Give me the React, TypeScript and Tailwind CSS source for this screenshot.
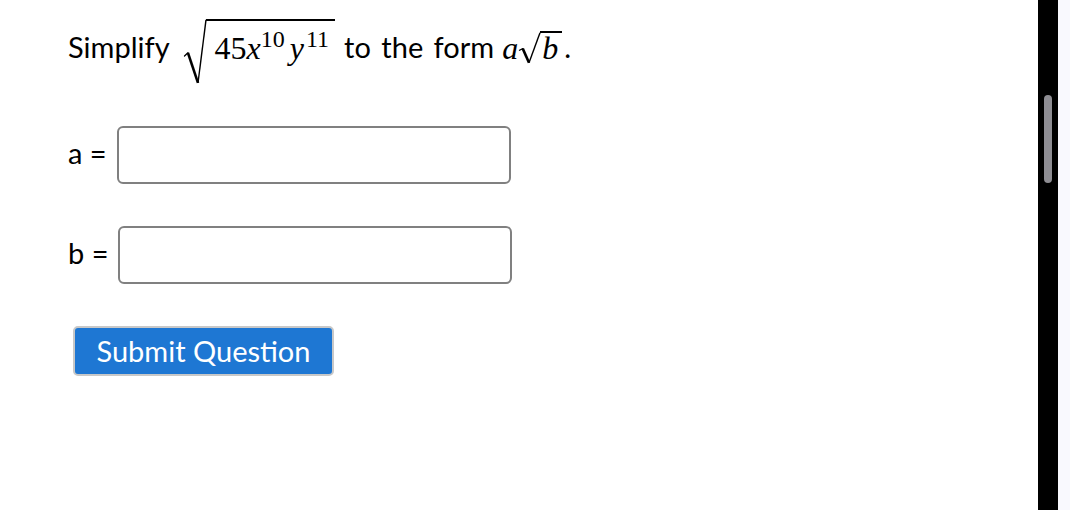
import React from "react";

const serif = { fontFamily: '"Liberation Serif", "DejaVu Serif", serif' };

function Radical({ h, w, bx }: { h: number; w: number; bx: number }) {
  const tx = w * 0.18;
  const ty = h * 0.52;
  const sx = h * 0.57;
  return (
    <svg width={w} height={h} viewBox={`0 0 ${w} ${h}`} className="block overflow-visible">
      <path d={`M0.5 ${sx} L${tx} ${ty}`} fill="none" stroke="black" strokeWidth="1.3" strokeLinecap="round" />
      <path d={`M${tx} ${ty} L${bx} ${h - 1.2}`} fill="none" stroke="black" strokeWidth="2.6" />
      <path d={`M${bx} ${h - 1.2} L${w} 0.8`} fill="none" stroke="black" strokeWidth="1.4" />
    </svg>
  );
}

export default function App() {
  return (
    <div className="flex h-[510px] w-[1070px] bg-white text-black" style={{ fontFamily: 'Lato, "Noto Sans", sans-serif' }}>
      <div className="flex-1 pl-[68px]">
        {/* question line */}
        <div className="flex items-start h-[90px]">
          <span className="text-[29px] leading-none mt-[32px]">Simplify</span>
          <span className="flex items-start ml-[14px] mt-[19px]">
            <Radical h={65} w={22} bx={14} />
            <span className="border-t-[2px] border-black flex items-start pl-[9px] pr-[6px] h-[46px]" style={serif}>
              <span className="text-[32px] leading-none mt-[11px]">45</span>
              <span className="text-[32px] leading-none mt-[11px] italic">x</span>
              <span className="text-[24px] leading-none mt-[6px]">10</span>
              <span className="text-[32px] leading-none mt-[11px] italic ml-[5px]">y</span>
              <span className="text-[24px] leading-none mt-[6px] ml-[2px]">11</span>
            </span>
          </span>
          <span className="text-[29px] leading-none mt-[32px] ml-[9px] [word-spacing:3px]">to the form</span>
          <span className="flex items-start ml-[8px]">
            <span className="text-[32px] leading-none mt-[32px] italic" style={serif}>a</span>
            <span className="mt-[32px] ml-[1px]">
              <Radical h={32} w={21} bx={10} />
            </span>
            <span className="border-t-[2px] border-black h-[30px] mt-[31px] flex items-start pl-[2px] pr-[4px]" style={serif}>
              <span className="text-[32px] leading-none -mt-[1px] italic">b</span>
            </span>
            <span className="text-[29px] leading-none mt-[32px] ml-[2px]">.</span>
          </span>
        </div>

        {/* inputs */}
        <div className="flex flex-col">
          <div className="flex items-center mt-[36px]">
            <span className="text-[29px] leading-none w-[49px] mb-[6px]">a =</span>
            <div className="w-[394px] h-[58px] border-2 border-[#808080] rounded-[6px] bg-white" />
          </div>
          <div className="flex items-center mt-[42px]">
            <span className="text-[29px] leading-none w-[50px] mb-[6px]">b =</span>
            <div className="w-[394px] h-[58px] border-2 border-[#808080] rounded-[6px] bg-white" />
          </div>
          <div className="mt-[42px] ml-[5px]">
            <button className="w-[261px] h-[50px] bg-[#1e77d3] border-2 border-[#c8c8c8] rounded-[5px] text-white text-[29px] leading-none flex items-center justify-center pb-[1px]">
              Submit Question
            </button>
          </div>
        </div>
      </div>
      <div className="w-[20px] bg-black pt-[95px] px-[6px]">
        <div className="h-[88px] bg-[#8e8d93] rounded-full" />
      </div>
      <div className="w-[12px] bg-[#f9f9fe]" />
    </div>
  );
}
